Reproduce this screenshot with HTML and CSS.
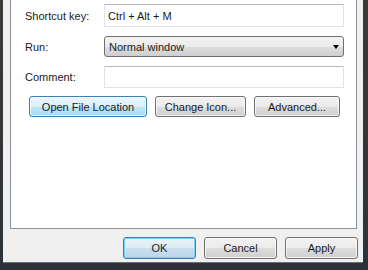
FILE: index.html
```html
<!DOCTYPE html>
<html>
<head>
<meta charset="utf-8">
<link rel="stylesheet" href="styles.css">
</head>
<body>
<div class="frame">
  <div class="dialog">
    <div class="panel">
      <div class="form">
        <label class="label">Shortcut key:</label>
        <div class="textbox">Ctrl + Alt + M</div>
        <label class="label">Run:</label>
        <div class="combo"><span>Normal window</span><span class="arrow"></span></div>
        <label class="label">Comment:</label>
        <div class="textbox"></div>
      </div>
      <div class="actions">
        <button class="btn btn-hot w-open">Open File Location</button>
        <button class="btn w-icon">Change Icon...</button>
        <button class="btn w-adv">Advanced...</button>
      </div>
    </div>
    <div class="footer">
      <button class="btn btn-default w-foot">OK</button>
      <button class="btn w-foot">Cancel</button>
      <button class="btn w-foot">Apply</button>
    </div>
  </div>
</div>
</body>
</html>
```

FILE: styles.css
```css
* { box-sizing: border-box; }
html, body { margin: 0; padding: 0; }
body {
  width: 368px;
  height: 270px;
  overflow: hidden;
  background: #2f3337;
  font-family: "Liberation Sans", Arial, sans-serif;
  font-size: 11px;
  color: #1a1a1a;
}
.frame {
  height: 270px;
  padding: 0 5px 7px 3px;
  background: linear-gradient(#3b3a37, #2c3338);
}
.dialog {
  height: 263px;
  background: #f0f0f0;
  padding: 0 6px 0 7px;
  display: flex;
  flex-direction: column;
  border-bottom: 1px solid #6b6f74;
}
.panel {
  height: 229px;
  background: #fff;
  border: 1px solid #8e9298;
  border-top: 0;
  padding: 4px 12px 0 14px;
}
.form {
  display: grid;
  grid-template-columns: 79px 240px;
  grid-template-rows: 23px 21px 22px;
  row-gap: 9px;
  align-items: center;
}
.label {
  line-height: 16px;
}
.textbox {
  height: 100%;
  border: 1px solid #dfe3e8;
  border-top-color: #b5b8bf;
  padding: 0 3px;
  display: flex;
  align-items: center;
  background: #fff;
}
.combo {
  height: 100%;
  border: 1px solid #707070;
  border-radius: 3px;
  background: linear-gradient(#f3f3f3 0%, #ebebeb 50%, #dddddd 51%, #cfcfcf 100%);
  padding: 0 4px;
  display: flex;
  align-items: center;
  justify-content: space-between;
}
.arrow {
  width: 0;
  height: 0;
  border-left: 3.5px solid transparent;
  border-right: 3.5px solid transparent;
  border-top: 4px solid #000;
}
.actions {
  display: flex;
  margin-top: 8px;
  margin-left: 4px;
  gap: 8px;
}
.btn {
  font-family: inherit;
  font-size: 11px;
  color: #1a1a1a;
  height: 21px;
  padding: 0;
  border: 1px solid #707070;
  border-radius: 3px;
  background: linear-gradient(#f2f2f2 0%, #ebebeb 50%, #dddddd 51%, #cfcfcf 100%);
  box-shadow: inset 0 0 0 1px rgba(255,255,255,0.7);
}
.btn-hot {
  border-color: #3c7fb1;
  background: linear-gradient(#eaf6fd 0%, #d9f0fc 50%, #bee6fd 51%, #a7d9f5 100%);
}
.btn-default {
  border-color: #3c7fb1;
  background: linear-gradient(#e9f2f8 0%, #dfecf5 50%, #c9dfef 51%, #bcd6ea 100%);
  box-shadow: inset 0 0 0 1px #7ad2f6;
}
.w-open { width: 118px; }
.w-icon { width: 91px; }
.w-adv { width: 86px; }
.footer {
  display: flex;
  justify-content: flex-end;
  gap: 8px;
  padding: 8px 5px 0 0;
  margin-right: -6px;
}
.w-foot { width: 73px; height: 22px; }
```
